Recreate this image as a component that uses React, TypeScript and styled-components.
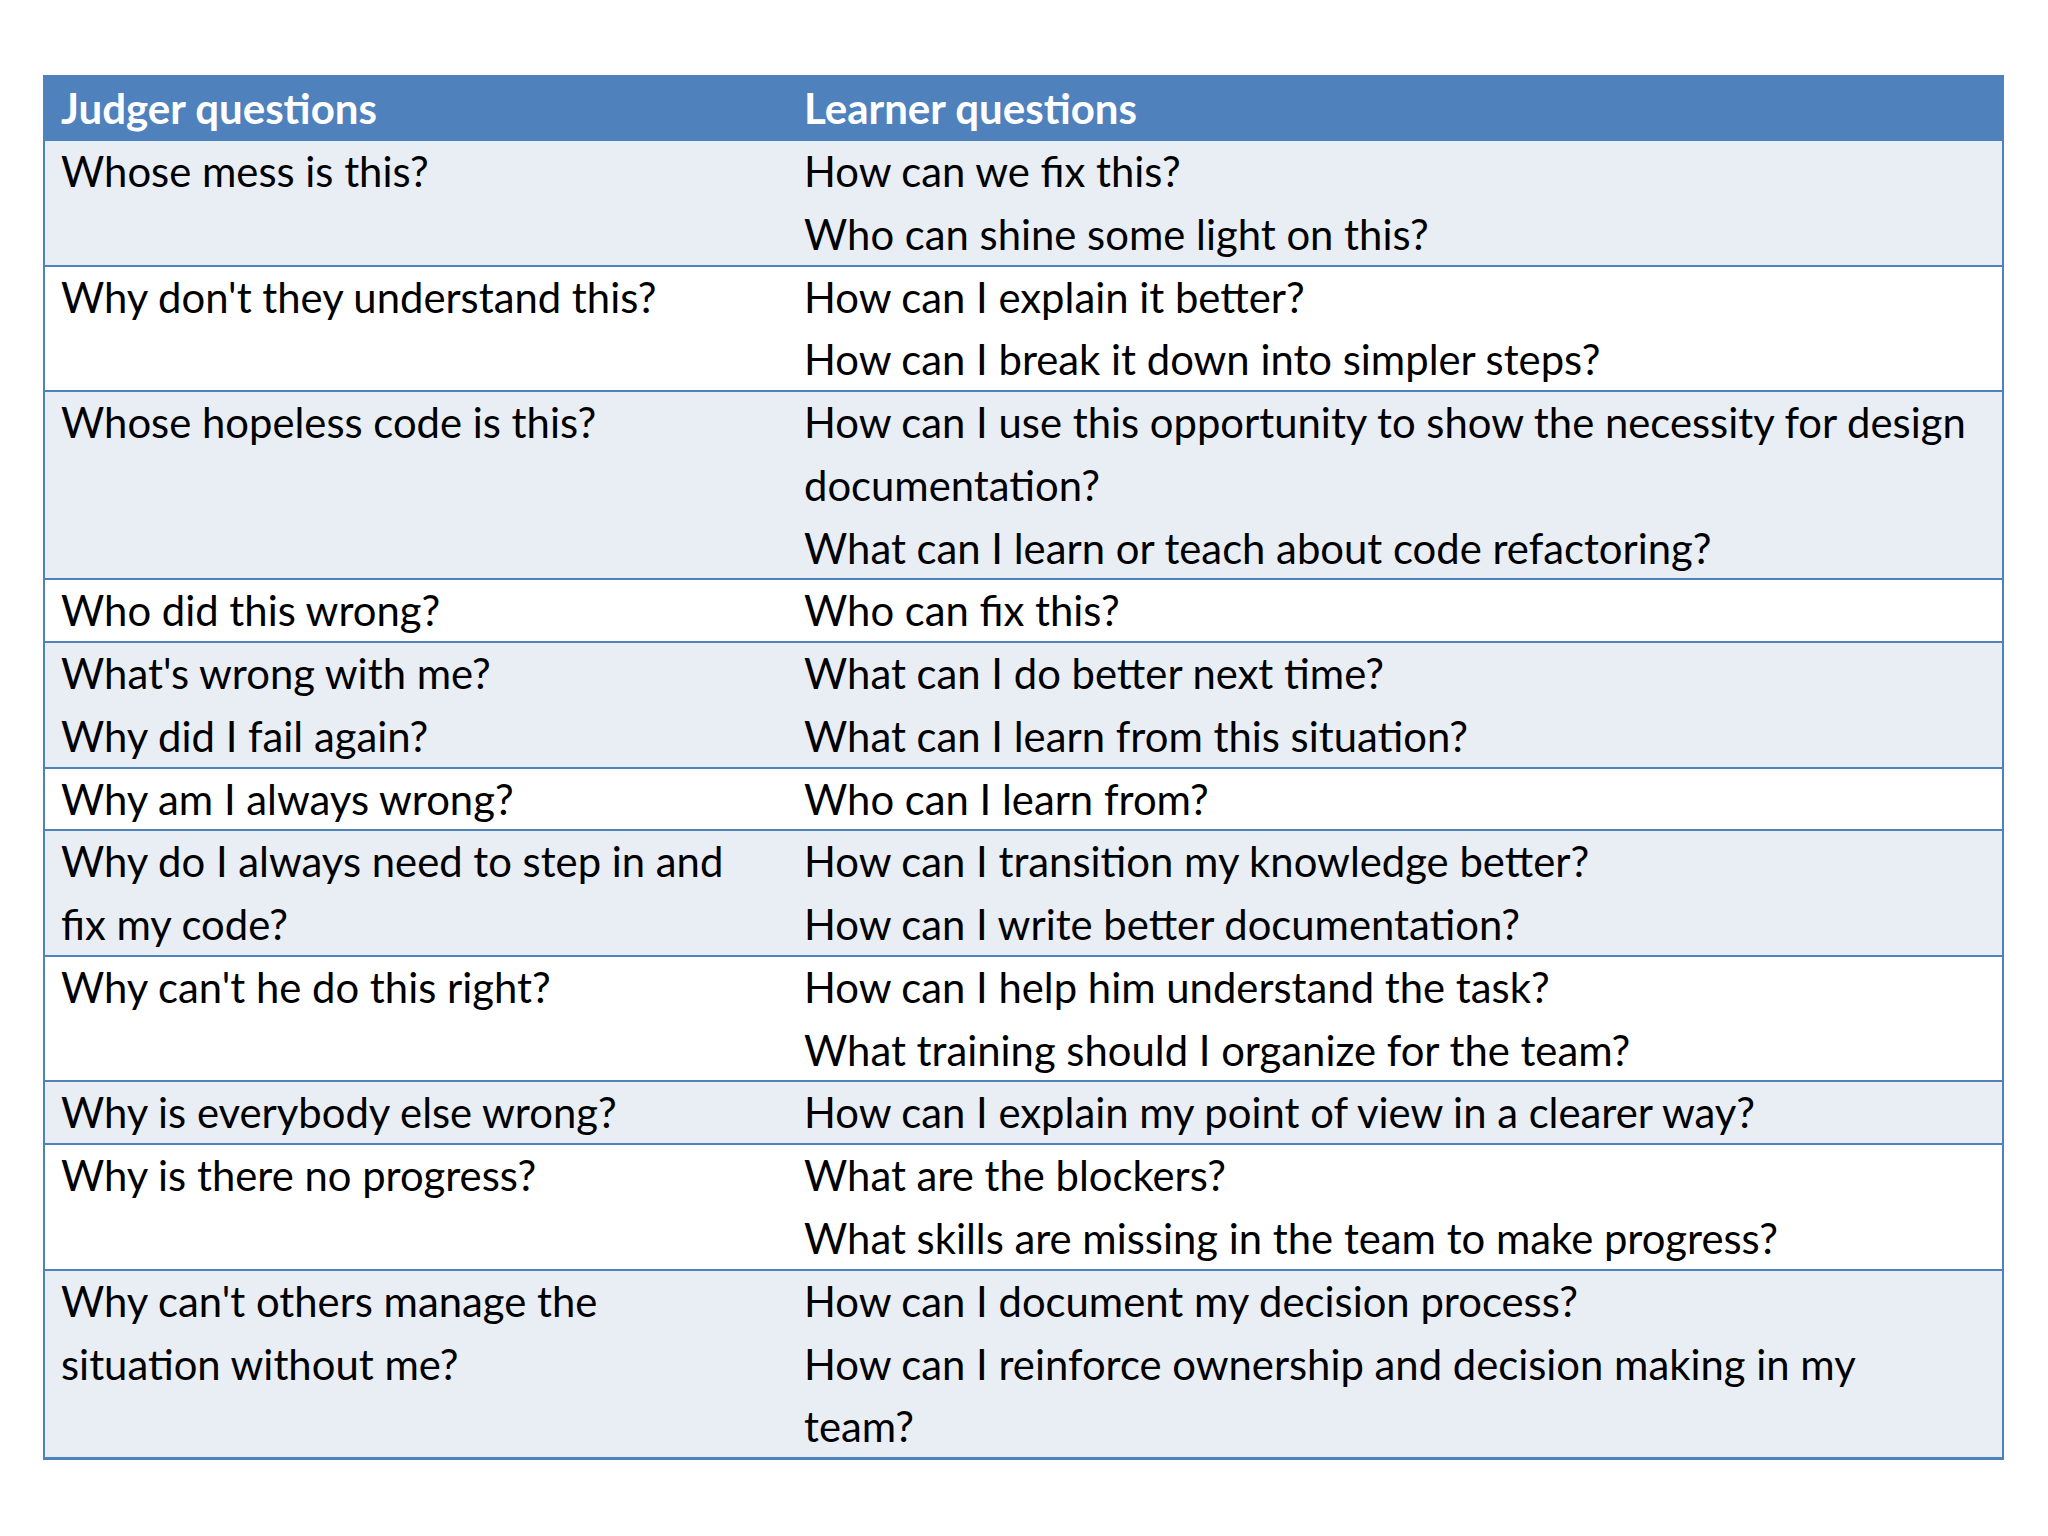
import React from 'react'
import styled, { createGlobalStyle } from 'styled-components'

const BLUE = '#4F81BD'
const BAND = '#E9EDF4'
const LINE = 62.76

const GlobalStyle = createGlobalStyle`
  html, body {
    margin: 0;
    padding: 0;
    background: #ffffff;
  }
`

const Page = styled.div`
  width: 2048px;
  height: 1536px;
  padding: 75px 0 0 43px;
  box-sizing: border-box;
  font-family: Lato, 'Open Sans', sans-serif;
  color: #000;
`

const Table = styled.div`
  width: 1961px;
  border: 2px solid ${BLUE};
  border-top-width: 0;
  box-sizing: border-box;
`

const HeaderRow = styled.div`
  display: grid;
  grid-template-columns: 742px 1fr;
  height: 65px;
  box-sizing: border-box;
  padding-top: 2px;
  background: ${BLUE};
  color: #fff;
  font-weight: 700;
  font-size: 42px;
  line-height: 63px;
`

const HeaderCell = styled.div<{ $first?: boolean }>`
  padding-left: ${(p) => (p.$first ? '16px' : '17px')};
  white-space: nowrap;
`

const Row = styled.div<{ $shaded: boolean }>`
  display: grid;
  grid-template-columns: 742px 1fr;
  background: ${(p) => (p.$shaded ? BAND : '#ffffff')};
  box-shadow: inset 0 1px 0 ${BLUE}, inset 0 -1px 0 ${BLUE};
`

const Cell = styled.div<{ $first?: boolean }>`
  padding-left: ${(p) => (p.$first ? '16px' : '17px')};
  font-size: 41.8px;
  line-height: ${LINE}px;
`

const Line = styled.div`
  white-space: nowrap;
`

type QRow = { judger: string[]; learner: string[] }

// wrapped lines are split the same way as the original table
const rows: QRow[] = [
  { judger: ['Whose mess is this?'], learner: ['How can we fix this?', 'Who can shine some light on this?'] },
  { judger: ["Why don't they understand this?"], learner: ['How can I explain it better?', 'How can I break it down into simpler steps?'] },
  {
    judger: ['Whose hopeless code is this?'],
    learner: [
      'How can I use this opportunity to show the necessity for design',
      'documentation?',
      'What can I learn or teach about code refactoring?',
    ],
  },
  { judger: ['Who did this wrong?'], learner: ['Who can fix this?'] },
  {
    judger: ["What's wrong with me?", 'Why did I fail again?'],
    learner: ['What can I do better next time?', 'What can I learn from this situation?'],
  },
  { judger: ['Why am I always wrong?'], learner: ['Who can I learn from?'] },
  {
    judger: ['Why do I always need to step in and', 'fix my code?'],
    learner: ['How can I transition my knowledge better?', 'How can I write better documentation?'],
  },
  {
    judger: ["Why can't he do this right?"],
    learner: ['How can I help him understand the task?', 'What training should I organize for the team?'],
  },
  { judger: ['Why is everybody else wrong?'], learner: ['How can I explain my point of view in a clearer way?'] },
  {
    judger: ['Why is there no progress?'],
    learner: ['What are the blockers?', 'What skills are missing in the team to make progress?'],
  },
  {
    judger: ["Why can't others manage the", 'situation without me?'],
    learner: ['How can I document my decision process?', 'How can I reinforce ownership and decision making in my', 'team?'],
  },
]

const App = () => (
  <Page>
    <GlobalStyle />
    <Table>
      <HeaderRow>
        <HeaderCell $first>Judger questions</HeaderCell>
        <HeaderCell>Learner questions</HeaderCell>
      </HeaderRow>
      {rows.map((r, i) => (
        <Row key={i} $shaded={i % 2 === 0}>
          <Cell $first>
            {r.judger.map((t) => (
              <Line key={t}>{t}</Line>
            ))}
          </Cell>
          <Cell>
            {r.learner.map((t) => (
              <Line key={t}>{t}</Line>
            ))}
          </Cell>
        </Row>
      ))}
    </Table>
  </Page>
)

export default App
